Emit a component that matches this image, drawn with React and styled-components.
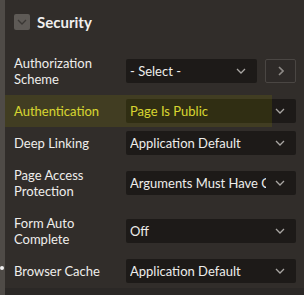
import styled, { createGlobalStyle } from 'styled-components';

const Global = createGlobalStyle`
  html, body {
    margin: 0;
    padding: 0;
    background: #312d2a;
  }
  body {
    font-family: Lato, "Noto Sans", "Liberation Sans", sans-serif;
  }
`;

const Frame = styled.div`
  display: flex;
  width: 304px;
  height: 295px;
  overflow: hidden;
  background: #312d2a;
`;

const Strip = styled.div`
  position: relative;
  width: 5px;
  flex: none;
  background: #4f4b47;
`;

const Dot = styled.span`
  position: absolute;
  left: 0;
  top: 266px;
  width: 4px;
  height: 4px;
  border-radius: 50%;
  background: #f2f2f2;
`;

const Panel = styled.div`
  flex: 1;
  display: flex;
  flex-direction: column;
`;

const Header = styled.div`
  display: flex;
  align-items: center;
  gap: 7px;
  height: 17px;
  padding: 13px 0 17px 9px;
`;

const Toggle = styled.span`
  display: flex;
  align-items: center;
  justify-content: center;
  width: 16px;
  height: 16px;
  border-radius: 2px;
  background: #5e5a56;
`;

const Title = styled.h2`
  margin: 0;
  font-size: 15px;
  font-weight: 700;
  color: #f0efee;
`;

const Rows = styled.div`
  display: flex;
  flex-direction: column;
`;

const Row = styled.div`
  position: relative;
  display: grid;
  grid-template-columns: 112px 170px;
  align-items: center;
  padding: 4px 0 4px 9px;
`;

const Highlight = styled.div`
  position: absolute;
  left: 0;
  top: 0;
  bottom: 0;
  width: 267px;
  background: rgba(140, 140, 0, 0.18);
  pointer-events: none;
`;

const Label = styled.label`
  padding: 4px 0;
  font-size: 13px;
  line-height: 16px;
  color: ${p => (p.$active ? '#e8e63c' : '#efeeec')};
`;

const Line = styled.span`
  display: block;
`;

const Controls = styled.div`
  display: flex;
  gap: 8px;
`;

const Select = styled.div`
  flex: 1;
  min-width: 0;
  display: flex;
  align-items: center;
  height: 24px;
  padding: 0 11px 0 4px;
  border-radius: 2px;
  background: #1d1a18;
`;

const Value = styled.span`
  flex: 1;
  min-width: 0;
  overflow: hidden;
  white-space: nowrap;
  font-size: 13px;
  color: ${p => (p.$active ? '#e8e63c' : '#eeedeb')};
`;

const Caret = styled.span`
  display: flex;
  width: 19px;
  justify-content: flex-end;
  flex: none;
`;

const NextButton = styled.button`
  width: 31px;
  height: 24px;
  padding: 0;
  display: flex;
  align-items: center;
  justify-content: center;
  background: #2e2a28;
  border: 1px solid #4a4643;
  border-radius: 2px;
`;

const Bottom = styled.div`
  margin-top: auto;
  height: 7px;
  background: #2b2826;
`;

const Down = ({ color = '#a9a6a3' }) => (
  <svg width="10" height="6" viewBox="0 0 10 6" fill="none">
    <path d="M1 1l4 4 4-4" stroke={color} strokeWidth="1.3" />
  </svg>
);

const Right = () => (
  <svg width="6" height="10" viewBox="0 0 6 10" fill="none">
    <path d="M1 1l4 4-4 4" stroke="#8e8a87" strokeWidth="1.6" />
  </svg>
);

const rows = [
  { label: ['Authorization', 'Scheme'], value: '- Select -', next: true },
  { label: ['Authentication'], value: 'Page Is Public', active: true },
  { label: ['Deep Linking'], value: 'Application Default' },
  { label: ['Page Access', 'Protection'], value: 'Arguments Must Have Checksum' },
  { label: ['Form Auto', 'Complete'], value: 'Off' },
  { label: ['Browser Cache'], value: 'Application Default' },
];

export default function App() {
  return (
    <>
      <Global />
      <Frame>
        <Strip>
          <Dot />
        </Strip>
        <Panel>
          <Header>
            <Toggle>
              <Down color="#3a3734" />
            </Toggle>
            <Title>Security</Title>
          </Header>
          <Rows>
            {rows.map(r => (
              <Row key={r.label.join(' ')}>
                {r.active && <Highlight />}
                <Label $active={r.active}>
                  {r.label.map((l, i) => (
                    <Line key={i}>{l}</Line>
                  ))}
                </Label>
                <Controls>
                  <Select>
                    <Value $active={r.active}>{r.value}</Value>
                    <Caret>
                      <Down />
                    </Caret>
                  </Select>
                  {r.next && (
                    <NextButton>
                      <Right />
                    </NextButton>
                  )}
                </Controls>
              </Row>
            ))}
          </Rows>
          <Bottom />
        </Panel>
      </Frame>
    </>
  );
}
